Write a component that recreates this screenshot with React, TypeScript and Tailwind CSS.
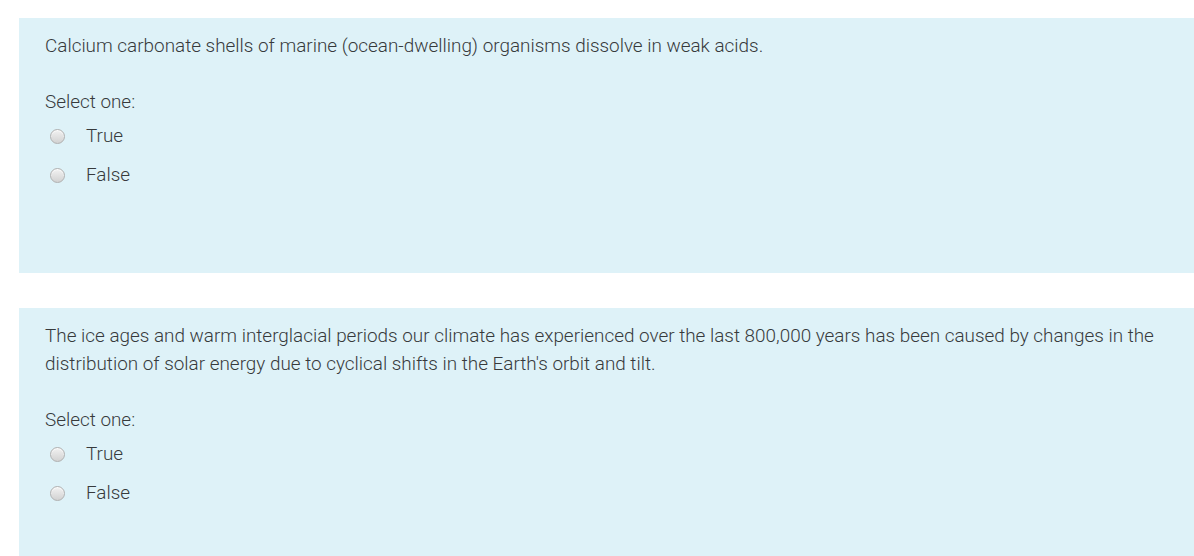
import React from 'react';

type Question = {
  id: string;
  text: string;
  heightClass: string;
};

const questions: Question[] = [
  {
    id: 'q1',
    text: 'Calcium carbonate shells of marine (ocean-dwelling) organisms dissolve in weak acids.',
    heightClass: 'h-[255px]',
  },
  {
    id: 'q2',
    text: "The ice ages and warm interglacial periods our climate has experienced over the last 800,000 years has been caused by changes in the distribution of solar energy due to cyclical shifts in the Earth's orbit and tilt.",
    heightClass: 'h-[260px]',
  },
];

const Radio: React.FC = () => (
  <span className="inline-block w-[15px] h-[15px] rounded-full border border-[#b0b0b0] bg-gradient-to-b from-[#f2f2f2] to-[#d2d2d2] shadow-[inset_0_1px_1px_rgba(255,255,255,0.8)]"></span>
);

const QuestionCard: React.FC<{ q: Question }> = ({ q }) => (
  <div className={`bg-[#def2f8] ${q.heightClass} pl-[26px] pr-[24px] pt-[14px]`}>
    <p className="leading-[28px]">{q.text}</p>
    <div className="mt-[28px] leading-[28px]">Select one:</div>
    <div className="flex flex-col gap-[11px] mt-[6px]">
      {['True', 'False'].map((opt) => (
        <label key={opt} className="flex items-center h-[28px]">
          <span className="w-[41px] pl-[5px] flex items-center">
            <Radio />
          </span>
          <span>{opt}</span>
        </label>
      ))}
    </div>
  </div>
);

export default function App() {
  return (
    <div
      className="w-[1194px] h-[556px] overflow-hidden bg-white pl-[19px] pt-[18px] text-[18.9px] text-[#373a3c] font-light"
      style={{ fontFamily: 'Roboto, "Noto Sans", sans-serif' }}
    >
      <div className="flex flex-col gap-[35px]">
        {questions.map((q) => (
          <QuestionCard key={q.id} q={q} />
        ))}
      </div>
    </div>
  );
}
